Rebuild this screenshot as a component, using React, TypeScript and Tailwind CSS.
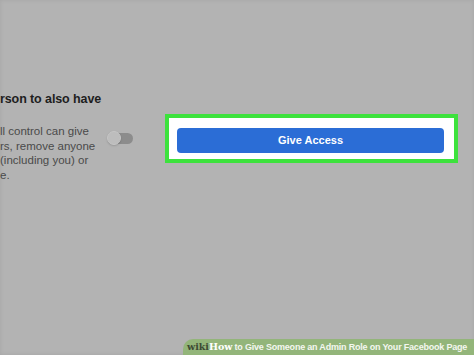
export default function App() {
  return (
    <div
      className="w-[474px] h-[355px] bg-[#b3b3b3] overflow-hidden flex flex-col shadow-[inset_0_0_4px_rgba(0,0,0,0.08)]"
      style={{ fontFamily: '"Liberation Sans", Arial, sans-serif' }}
    >
      <div className="pt-[90px]">
        <div className="text-[12.5px] leading-[18px] font-bold text-[#1e1e1e] tracking-[-0.1px]">
          rson to also have
        </div>
        <div className="flex items-start mt-[6px]">
          <div className="w-[107px] mt-[10px] text-[11.5px] leading-[14.5px] text-[#4a4a4a]">
            <div>ll control can give</div>
            <div>rs, remove anyone</div>
            <div>(including you) or</div>
            <div>e.</div>
          </div>
          <div className="mt-[17px] w-[26px] h-[14px] relative">
            <div className="absolute right-0 top-[1.5px] w-[20px] h-[11px] rounded-full bg-[#8c8c8c]" />
            <div className="absolute left-0 top-0 w-[14px] h-[14px] rounded-full bg-[#bdbdbd] border border-[#c6c6c6] shadow-[0_1px_2px_rgba(0,0,0,0.15)]" />
          </div>
          <div className="ml-[32px] w-[293px] h-[49px] border-[4px] border-[#3de23d] bg-white pt-[10px] pl-[8px] pr-[10px]">
            <div className="h-[25px] rounded-[4px] bg-[#2b6dd6] flex items-center justify-center text-white text-[11px] font-bold">
              Give Access
            </div>
          </div>
        </div>
      </div>
      <div className="flex-1" />
      <div className="flex justify-end">
        <div className="w-[291px] h-[16px] bg-[#93b57a] rounded-tl-[10px] flex items-center pl-[4px] text-[10px] font-bold leading-none whitespace-nowrap overflow-hidden">
          <span className="text-[#3d4a33] text-[9.5px]" style={{ fontFamily: '"DejaVu Serif", serif' }}>wiki</span>
          <span className="text-white text-[9.5px]" style={{ fontFamily: '"DejaVu Serif", serif' }}>How</span>
          <span className="text-[#f4f7f0] ml-[2px] text-[9px] tracking-[-0.2px]">to Give Someone an Admin Role on Your Facebook Page</span>
        </div>
      </div>
    </div>
  );
}
